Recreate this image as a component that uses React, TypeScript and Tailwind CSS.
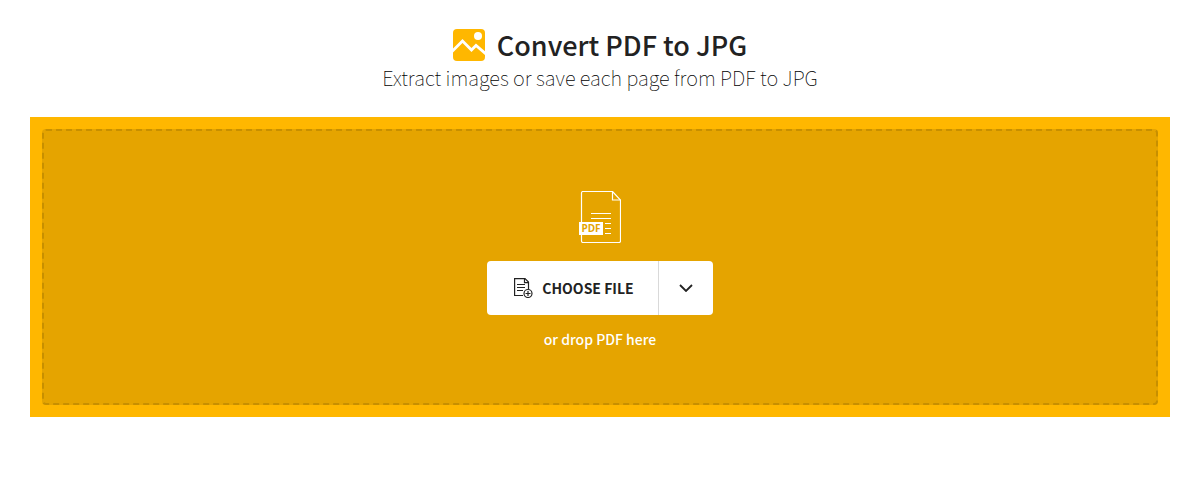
import { useRef, useState } from "react";

function ImageIcon() {
  return (
    <svg width="32" height="32" viewBox="0 0 32 32" aria-hidden="true">
      <rect width="32" height="32" rx="4" fill="#ffb700" />
      <circle cx="25" cy="7" r="4" fill="#fff" />
      <path
        d="M-1 22.500 9.500 12l9 9 4.500-4.500L33 25"
        fill="none"
        stroke="#fff"
        strokeWidth="2.8"
      />
    </svg>
  );
}

function PdfIcon() {
  return (
    <svg width="42" height="52" viewBox="0 0 42 52" aria-hidden="true">
      <g fill="none" stroke="#fff" strokeWidth="1.2">
        <path d="M2.5 31V2Q2.5.5 4 .5h29.500l8 8.500v41q0 1.500-1.500 1.500H4q-1.500 0-1.500-1.500v-6" />
        <path d="M33.500.5V9h8" />
        <path d="M12 22.500h20M12 27.500h20M26 32.500h6M26 37.500h6M26 42.500h6" />
      </g>
      <rect y="31" width="24" height="13" fill="#fff" />
      <text
        x="12"
        y="41"
        textAnchor="middle"
        className="fill-[#e5a400] font-['Open_Sans',sans-serif] text-[10px] font-bold"
      >
        PDF
      </text>
    </svg>
  );
}

function AddFileIcon() {
  return (
    <svg
      width="19"
      height="20"
      viewBox="0 0 19 20"
      fill="none"
      stroke="#222"
      strokeWidth="1.2"
      aria-hidden="true"
    >
      <path d="M9 17.500H.6V.6h10.400l3.500 3.500V11" />
      <path d="M10.500.6v4h4" />
      <path d="M3 6.500h8M3 9.500h8M3 12.500h6" />
      <circle cx="14" cy="15.500" r="4" fill="#fff" />
      <path d="M14 13v5M11.500 15.500h5" />
    </svg>
  );
}

function ChevronIcon() {
  return (
    <svg width="14" height="8" viewBox="0 0 14 8" aria-hidden="true">
      <path d="m1 1 6 6 6-6" fill="none" stroke="#222" strokeWidth="1.8" />
    </svg>
  );
}

function App() {
  const inputRef = useRef<HTMLInputElement>(null);
  const [fileName, setFileName] = useState("");

  const handleDrop = (e: React.DragEvent) => {
    e.preventDefault();
    setFileName(e.dataTransfer.files[0]?.name ?? "");
  };

  return (
    <main className="pt-7 pr-[25px] pl-[30px] font-['Noto_Sans_CJK_SC',sans-serif] text-[#222]">
      {/* Heading */}
      <header className="text-center">
        <h1 className="flex items-center justify-center gap-3 text-[27px] leading-[34px] font-medium">
          <ImageIcon />
          Convert PDF to JPG
        </h1>
        <p className="text-xl leading-8 font-thin text-black">
          Extract images or save each page from PDF to JPG
        </p>
      </header>

      {/* Drop area */}
      <section
        className="mt-[23px] bg-[#ffb700] p-3"
        onDragOver={(e) => e.preventDefault()}
        onDrop={handleDrop}
      >
        <div className="flex flex-col items-center rounded border-2 border-dashed border-[#c78f00] bg-[#e5a400] pt-[60px] pb-[52px]">
          <PdfIcon />
          <div className="mt-[18px] flex h-[54px] overflow-hidden rounded bg-white">
            <button
              type="button"
              onClick={() => inputRef.current?.click()}
              className="flex items-center gap-[9px] pr-6 pl-[27px] text-sm font-bold"
            >
              <AddFileIcon />
              CHOOSE FILE
            </button>
            <button
              type="button"
              aria-label="More sources"
              className="flex w-[55px] items-center justify-center border-l border-[#d9d9d9]"
            >
              <ChevronIcon />
            </button>
          </div>
          <input
            ref={inputRef}
            type="file"
            accept="application/pdf"
            aria-label="PDF file"
            className="hidden"
            onChange={(e) => setFileName(e.target.files?.[0]?.name ?? "")}
          />
          <p className="mt-3 text-sm leading-6 font-medium text-white">
            {fileName || "or drop PDF here"}
          </p>
        </div>
      </section>
    </main>
  );
}

export default App;
